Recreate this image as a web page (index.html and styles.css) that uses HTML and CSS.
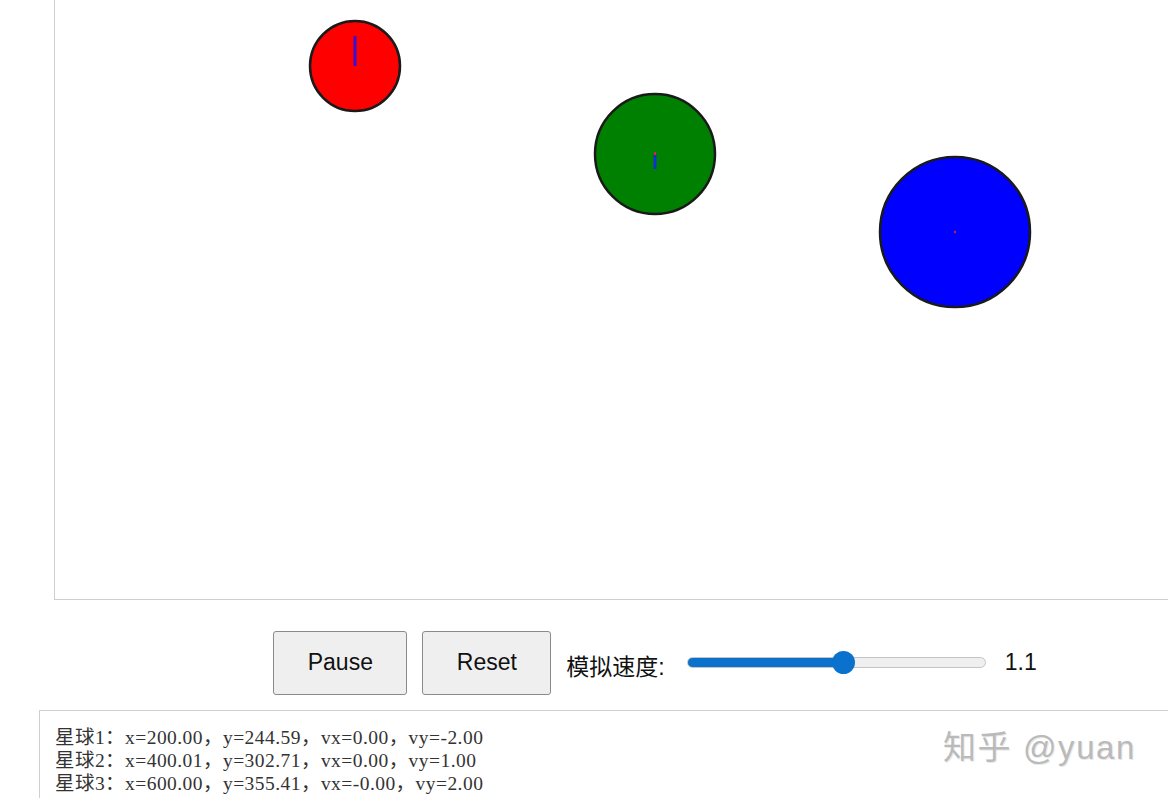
FILE: index.html
```html
<!DOCTYPE html>
<html lang="zh-CN">
<head>
<meta charset="utf-8">
<title>三体模拟</title>
<link rel="stylesheet" href="styles.css">
</head>
<body>
<div class="page">
  <div class="stage">
    <svg class="sky" width="1200" height="599" viewBox="0 0 1200 599">
      <circle cx="300" cy="66" r="45" fill="#ff0000" stroke="#1a1a1a" stroke-width="2.5"/>
      <line x1="300" y1="36" x2="300" y2="66" stroke="#3a10d0" stroke-width="3"/>
      <circle cx="600" cy="154" r="60" fill="#008000" stroke="#1a1a1a" stroke-width="2.5"/>
      <line x1="600" y1="154" x2="600" y2="169" stroke="#1030d0" stroke-width="3"/>
      <line x1="600" y1="152" x2="600" y2="155" stroke="#d03030" stroke-width="2"/>
      <circle cx="900" cy="232" r="75" fill="#0000ff" stroke="#1a1a1a" stroke-width="2.5"/>
      <circle cx="900" cy="232" r="1.2" fill="#c02060"/>
    </svg>
  </div>
  <div class="controls">
    <button class="btn btn-pause">Pause</button>
    <button class="btn btn-reset">Reset</button>
    <label class="speed-label" for="speed">模拟速度:</label>
    <input id="speed" class="speed" type="range" min="0.1" max="2" step="0.1" value="1.1" style="--fill: 52.6%;">
    <span class="speed-value">1.1</span>
  </div>
  <div class="info">
    <div class="line">星球1：x=200.00，y=244.59，vx=0.00，vy=-2.00</div>
    <div class="line">星球2：x=400.01，y=302.71，vx=0.00，vy=1.00</div>
    <div class="line">星球3：x=600.00，y=355.41，vx=-0.00，vy=2.00</div>
  </div>
  <div class="watermark">知乎 @yuan</div>
</div>
</body>
</html>
```
FILE: styles.css
```css
html, body {
  margin: 0;
  padding: 0;
  background: #ffffff;
  overflow: hidden;
}

.page {
  position: relative;
  width: 1168px;
  height: 798px;
  overflow: hidden;
  font-family: "Liberation Sans", Arial, "Noto Sans CJK SC", sans-serif;
}

.stage {
  margin-left: 54px;
  width: 1200px;
  border-left: 1.5px solid #cfcfcf;
  border-bottom: 1.5px solid #cfcfcf;
  background: #ffffff;
}

.sky {
  display: block;
}

.controls {
  width: 1200px;
  margin-left: 55px;
  margin-top: 30.5px;
  height: 64px;
  display: flex;
  align-items: center;
  justify-content: center;
}

.btn {
  box-sizing: border-box;
  height: 64px;
  background: #efefef;
  border: 1px solid #8a8a8a;
  border-radius: 3px;
  font-family: "Liberation Sans", Arial, sans-serif;
  font-size: 23px;
  color: #111111;
  padding: 0;
  margin: 0;
}

.btn-pause {
  width: 134px;
}

.btn-reset {
  width: 129px;
  margin-left: 15px;
}

.speed-label {
  margin-left: 15px;
  font-size: 23px;
  color: #111111;
  font-family: "Liberation Sans", Arial, "Noto Sans CJK SC", sans-serif;
  position: relative;
  top: 2px;
}

.speed {
  -webkit-appearance: none;
  appearance: none;
  width: 299px;
  height: 11px;
  margin: 0 0 0 22px;
  border-radius: 6px;
  border: 1px solid #c4c4c4;
  box-sizing: border-box;
  background: linear-gradient(to right, #0a72cc 0, #0a72cc var(--fill), #efefef var(--fill), #efefef 100%);
  outline: none;
}

.speed::-webkit-slider-thumb {
  -webkit-appearance: none;
  appearance: none;
  width: 23px;
  height: 23px;
  border-radius: 50%;
  background: #0a72cc;
  border: none;
}

.speed-value {
  margin-left: 19px;
  font-size: 23px;
  color: #111111;
}

.info {
  margin-top: 15px;
  margin-left: 39px;
  width: 1200px;
  height: 120px;
  border-top: 1.5px solid #cfcfcf;
  border-left: 1.5px solid #cfcfcf;
  box-sizing: border-box;
  padding: 15px 0 0 15px;
  font-family: "Liberation Serif", "Noto Sans CJK SC", serif;
  font-size: 19.5px;
  line-height: 23px;
  letter-spacing: 0.45px;
  color: #333333;
}

.line {
  white-space: pre;
}

.watermark {
  position: absolute;
  left: 943px;
  top: 721px;
  font-family: "Liberation Sans", Arial, "Noto Sans CJK SC", sans-serif;
  font-size: 33px;
  color: #bababa;
  letter-spacing: 1.6px;
  text-shadow: 1px 1px 0 #e8e8e8;
}
```
